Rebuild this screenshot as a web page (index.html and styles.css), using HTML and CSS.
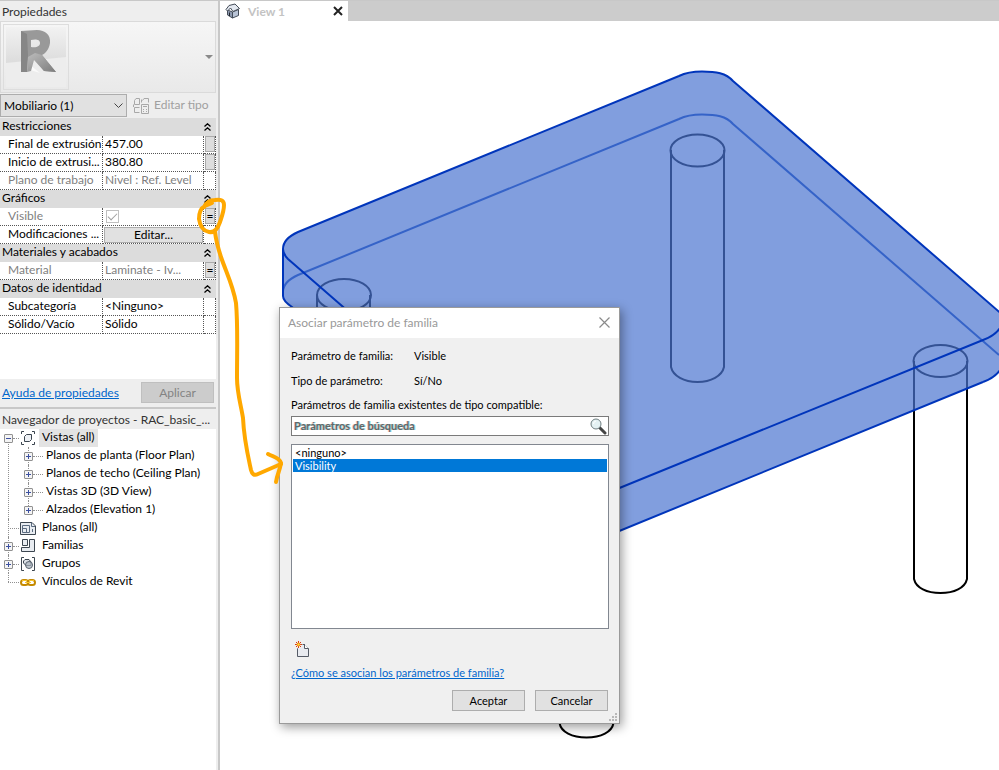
FILE: index.html
```html
<!DOCTYPE html>
<html lang="es">
<head>
  <meta charset="UTF-8">
  <meta name="viewport" content="width=device-width, initial-scale=1.0">
  <title>Asociar parámetro de familia</title>
  <link rel="stylesheet" href="styles.css">
</head>
<body>
  <aside class="sidebar">
    <section class="properties">
      <h2 class="panel-title">Propiedades</h2>

      <div class="type-selector">
        <div class="type-thumb">
          <svg width="60" height="60" viewBox="0 0 60 60">
            <defs>
              <linearGradient id="thumbBg" x1="0" y1="0" x2="0" y2="1">
                <stop offset="0" stop-color="#f2f2f2"/>
                <stop offset="1" stop-color="#dcdcdc"/>
              </linearGradient>
              <linearGradient id="legShade" x1="0" y1="0" x2="1" y2="1">
                <stop offset="0" stop-color="#bdbdbd"/>
                <stop offset="1" stop-color="#7c7c7c"/>
              </linearGradient>
            </defs>
            <rect width="60" height="36" fill="url(#thumbBg)"/>
            <path d="M0 36 60 30V60H0z" fill="#ededed"/>
            <path d="M21 42 34 46 24 38z" fill="#fafafa"/>
            <path fill-rule="evenodd" d="M15 4 31 3C39 3 45 8 44 16C43 22 40 26 36 28L50 45 38 44 27 30 22 32 21 45 15 45z M25 13V20C31 21 34 19 34 16C34 12 29 12 25 13z" fill="#999"/>
            <path d="M15 4 21 7 22 28 21 45 15 45z" fill="#868686"/>
            <path d="M22 30 29 26 36 28 50 45 38 44 28 33 25 44 21 45z" fill="url(#legShade)"/>
          </svg>
        </div>
        <span class="caret"></span>
      </div>

      <div class="filter-row">
        <div class="filter">
          <select aria-label="Filtro de categoría">
            <option>Mobiliario (1)</option>
          </select>
          <svg width="9" height="6" viewBox="0 0 9 6" fill="none" stroke="#444"><path d="M.5 .5 4.500 4.500 8.500 .5"/></svg>
        </div>
        <button class="edit-type" type="button" disabled>
          <svg width="17" height="16" viewBox="0 0 17 16" fill="none" stroke="#a8a8a8">
            <path d="M1.500 2.500 3 .5H6.500V6.500H1.500zM9.500 2.500 11 .5H15.500V4.500M8.500 4.500V1.500M.5 6.500V9M1.500 9.500H6.500M1.500 9.500V14.500H6.500M8.500 6.500H15.500V15.500H8.500z"/>
            <path d="M10 8.500H14M10 11.500H11M13 11.500H14M10 13.500H11M13 13.500H14"/>
          </svg>
          <span>Editar tipo</span>
        </button>
      </div>

      <div class="props-area">
        <table class="props">
          <colgroup>
            <col class="col-name">
            <col>
            <col class="col-assoc">
          </colgroup>
          <tbody>
            <tr class="group"><th colspan="2">Restricciones</th><td><svg class="chevrons" viewBox="0 0 7 8"><path d="M.5 3.500 3.500 .8 6.500 3.500M.5 7.500 3.500 4.800 6.500 7.500"/></svg></td></tr>
            <tr><th>Final de extrusión</th><td>457.00</td><td><button class="assoc" type="button" aria-label="Asociar"></button></td></tr>
            <tr><th>Inicio de extrusi...</th><td>380.80</td><td><button class="assoc" type="button" aria-label="Asociar"></button></td></tr>
            <tr class="readonly"><th>Plano de trabajo</th><td>Nivel : Ref. Level</td><td></td></tr>

            <tr class="group"><th colspan="2">Gráficos</th><td><svg class="chevrons" viewBox="0 0 7 8"><path d="M.5 3.500 3.500 .8 6.500 3.500M.5 7.500 3.500 4.800 6.500 7.500"/></svg></td></tr>
            <tr class="readonly"><th><label for="visible">Visible</label></th><td><input id="visible" class="check" type="checkbox" checked disabled></td><td><button class="assoc" type="button">=</button></td></tr>
            <tr><th>Modificaciones ...</th><td class="has-button"><button class="edit" type="button">Editar...</button></td><td></td></tr>

            <tr class="group"><th colspan="2">Materiales y acabados</th><td><svg class="chevrons" viewBox="0 0 7 8"><path d="M.5 3.500 3.500 .8 6.500 3.500M.5 7.500 3.500 4.800 6.500 7.500"/></svg></td></tr>
            <tr class="readonly"><th>Material</th><td>Laminate - Iv...</td><td><button class="assoc" type="button">=</button></td></tr>

            <tr class="group"><th colspan="2">Datos de identidad</th><td><svg class="chevrons" viewBox="0 0 7 8"><path d="M.5 3.500 3.500 .8 6.500 3.500M.5 7.500 3.500 4.800 6.500 7.500"/></svg></td></tr>
            <tr><th>Subcategoría</th><td>&lt;Ninguno&gt;</td><td></td></tr>
            <tr><th>Sólido/Vacío</th><td>Sólido</td><td></td></tr>
          </tbody>
        </table>
      </div>

      <div class="props-footer">
        <a href="#">Ayuda de propiedades</a>
        <button class="apply" type="button" disabled>Aplicar</button>
      </div>
    </section>

    <section class="browser">
      <h2 class="panel-title">Navegador de proyectos - RAC_basic_...</h2>
      <ul class="tree">
        <li>
          <div class="node">
            <button class="toggle open" type="button" aria-label="Contraer"></button><span class="dots"></span>
            <svg class="icon" viewBox="0 0 16 16" fill="none" stroke="#3c4650">
              <path d="M4 1.500H1.500V4M12 1.500H14.500V4M1.500 12V14.500H4M14.500 12V14.500H12"/>
              <path d="M4.500 6.500 6.500 4.500H11.500V9.500L9.500 11.500H4.500z" fill="#eef1f5"/>
            </svg>
            <span class="label selected">Vistas (all)</span>
          </div>
          <ul>
            <li><div class="node"><button class="toggle" type="button" aria-label="Expandir"></button><span class="dots"></span><span class="label">Planos de planta (Floor Plan)</span></div></li>
            <li><div class="node"><button class="toggle" type="button" aria-label="Expandir"></button><span class="dots"></span><span class="label">Planos de techo (Ceiling Plan)</span></div></li>
            <li><div class="node"><button class="toggle" type="button" aria-label="Expandir"></button><span class="dots"></span><span class="label">Vistas 3D (3D View)</span></div></li>
            <li><div class="node"><button class="toggle" type="button" aria-label="Expandir"></button><span class="dots"></span><span class="label">Alzados (Elevation 1)</span></div></li>
          </ul>
        </li>
        <li>
          <div class="node leaf">
            <span class="dots"></span>
            <svg class="icon" viewBox="0 0 16 16" fill="none" stroke="#3c4650">
              <path d="M.5 2.500H12L15.500 6V14.500H.5z" fill="#e8ecf1"/>
              <path d="M11.500 2.500V6.500H15M2.500 5.500H9.500V12.500H2.500zM2.500 8.500H6.500V12.500M12.500 9V12" stroke="#5a6b80"/>
            </svg>
            <span class="label">Planos (all)</span>
          </div>
        </li>
        <li>
          <div class="node">
            <button class="toggle" type="button" aria-label="Expandir"></button><span class="dots"></span>
            <svg class="icon" viewBox="0 0 16 16" stroke="#3c4650" fill="#e8ecf1">
              <path d="M2.500 1.500H7.500V7.500H2.500zM9.500 1.500H14.500V13.500H1.500V9.500H9.500z"/>
            </svg>
            <span class="label">Familias</span>
          </div>
        </li>
        <li>
          <div class="node">
            <button class="toggle" type="button" aria-label="Expandir"></button><span class="dots"></span>
            <svg class="icon" viewBox="0 0 16 16" fill="none" stroke="#3c4650">
              <path d="M4 1.500H1.500V14.500H4M12 1.500H14.500V14.500H12"/>
              <path d="M5 3.500H9L11 6V9.500H6L3.500 7V5z" fill="#dde2e8"/>
              <circle cx="9" cy="9" r="3.500" fill="#aab3be" fill-opacity=".7" stroke="#5a6470"/>
            </svg>
            <span class="label">Grupos</span>
          </div>
        </li>
        <li>
          <div class="node leaf">
            <span class="dots"></span>
            <svg class="icon" viewBox="0 0 16 16" fill="none">
              <rect x="1" y="6" width="7" height="5" rx="2.500" stroke="#c58a00" stroke-width="2"/>
              <rect x="8" y="6" width="7" height="5" rx="2.500" stroke="#c58a00" stroke-width="2"/>
              <path d="M2 6.500H7M9 6.500H14M5 8.500H11" stroke="#f7c52b"/>
            </svg>
            <span class="label">Vínculos de Revit</span>
          </div>
        </li>
      </ul>
    </section>
  </aside>

  <main class="workspace">
    <div class="tabs">
      <div class="tab">
        <svg width="16" height="16" viewBox="0 0 16 16" stroke="#444c58" stroke-linejoin="round">
          <path d="M2.500 7V12L7.500 15V9z" fill="#8e9ab0"/>
          <path d="M7.500 9 13.500 6.500V12.500L7.500 15z" fill="#b9c4d6"/>
          <path d="M1 6.500 4 2.500 10 1 14.500 5.500 8 8.500 5.500 5 2.500 8z" fill="#e3e8f0"/>
          <path d="M4.500 9.500V13" stroke="#20252d"/>
        </svg>
        <span class="tab-name">View 1</span>
        <button class="tab-close" type="button" aria-label="Cerrar vista">
          <svg width="10" height="10" viewBox="0 0 10 10"><path d="M1 1 9 9M9 1 1 9" stroke="#222" stroke-width="2"/></svg>
        </button>
      </div>
    </div>
    <div class="canvas">
      <svg class="model" viewBox="220 21 779 749" preserveAspectRatio="xMinYMin slice" fill="none">
        <!-- legs below the board -->
        <g stroke="#000" stroke-width="2">
          <path d="M914 409V579C916 588 927 593 940.500 593S965 588 967 579V388"/>
          <path d="M559.500 690V723C561 732 572 737.500 586.500 737.500S612 732 613.500 723V690"/>
        </g>
        <!-- selected board -->
        <path d="M283 296V249C283 241 289 236 298 232L679 76C685 73 692 71.500 702 71.500C716 71.500 726 73 733 81L999 312L1020 330V372L999 370C995 376 991 379 983 382L590 543Q572 550 556 537L292 307Q283 301 283 296z" fill="#819ede"/>
        <g stroke="#3563c8" stroke-width="2">
          <path d="M283 292C283 284 289 279 298 275L679 119C685 116 692 114.500 702 114.500C716 114.500 726 116 733 124L999 355"/>
        </g>
        <!-- legs seen through the board -->
        <g stroke="#345294" stroke-width="2">
          <ellipse cx="697.500" cy="150.500" rx="27" ry="16"/>
          <path d="M671 150V367C673 376 684 382 697.500 382S722 376 724 367V150"/>
          <ellipse cx="344" cy="295" rx="27" ry="16"/>
          <path d="M317 295V320M370 295V320"/>
          <ellipse cx="940.500" cy="361" rx="27" ry="16"/>
          <path d="M914 361V410M967 361V389"/>
        </g>
        <g stroke="#0035bb" stroke-width="2">
          <path d="M983 382 590 543Q572 550 556 537L292 307Q283 301 283 296V249C283 241 289 236 298 232L679 76C685 73 692 71.500 702 71.500C716 71.500 726 73 733 81L1001 313.500"/>
          <path d="M283 249C283 253 284 255 288 259L556 492Q572 507 590 500L983 340C991 337 996 334 1000 328M983 382C991 379 996 376 1000 370"/>
        </g>
      </svg>
    </div>
  </main>

  <div class="dialog" role="dialog" aria-labelledby="dialogTitle">
    <header class="dialog-bar">
      <h1 id="dialogTitle">Asociar parámetro de familia</h1>
      <button class="dialog-close" type="button" aria-label="Cerrar">
        <svg width="11" height="11" viewBox="0 0 11 11"><path d="M.5 .5 10.500 10.500M10.500 .5 .5 10.500" stroke="#8a8a8a" stroke-width="1.200"/></svg>
      </button>
    </header>
    <div class="dialog-body">
      <dl class="info">
        <dt>Parámetro de familia:</dt><dd>Visible</dd>
        <dt>Tipo de parámetro:</dt><dd>Sí/No</dd>
      </dl>
      <label class="list-label" for="paramList">Parámetros de familia existentes de tipo compatible:</label>
      <div class="search">
        <input type="text" placeholder="Parámetros de búsqueda" aria-label="Parámetros de búsqueda">
        <svg width="17" height="17" viewBox="0 0 17 17" fill="none">
          <path d="M9.500 9.500 15 15" stroke="#444" stroke-width="3" stroke-linecap="round"/>
          <circle cx="6" cy="6" r="5" fill="#e4f1f3" stroke="#6f7d80"/>
          <path d="M3.500 6A3 3 0 0 1 6 3" stroke="#fff"/>
        </svg>
      </div>
      <select id="paramList" class="param-list" size="2">
        <option>&lt;ninguno&gt;</option>
        <option selected>Visibility</option>
      </select>
      <button class="new-param" type="button" aria-label="Nuevo parámetro">
        <svg width="16" height="18" viewBox="0 0 16 18" fill="none">
          <path d="M3.500 4.500H10.500L14.500 8.500V16.500H3.500z" fill="#e9ebf0" stroke="#555b66"/>
          <path d="M10.500 4V8.500H14.500" stroke="#555b66" fill="#fff"/>
          <circle cx="4.500" cy="4.500" r="4" fill="#efefef"/>
          <path d="M4.500 1V8M1 4.500H8M2 2 7 7M7 2 2 7" stroke="#d83a10"/>
          <circle cx="4.500" cy="4.500" r="1.500" fill="#ffe640" stroke="#f08a10"/>
        </svg>
      </button>
      <a class="help" href="#">¿Cómo se asocian los parámetros de familia?</a>
      <div class="actions">
        <button type="button">Aceptar</button>
        <button type="button">Cancelar</button>
      </div>
    </div>
    <svg class="grip" width="8" height="8" viewBox="0 0 8 8" fill="#b8b8b8">
      <path d="M6 0h2v2H6zM6 3h2v2H6zM3 3h2v2H3zM6 6h2v2H6zM3 6h2v2H3zM0 6h2v2H0z"/>
    </svg>
  </div>

  <!-- hand drawn arrow from the associate button to the list -->
  <svg class="marker" width="300" height="500" viewBox="0 0 300 500" fill="none" stroke="#ffa800" stroke-width="4" stroke-linecap="round" stroke-linejoin="round">
    <path d="M212 203 205 206C201 208 199 213 199 219C200 226 203 231 209 232C215 233 218 228 220 222C222 216 224 211 224 205C224 200 220 199 215 200C210 200 206 203 204 207"/>
    <path d="M215 232C216 240 218 248 221 257C226 272 233 285 236 303C238 325 237 350 237 378C237 393 241 405 243 418C244 440 248 456 251 470C252 474 254 476 258 474L281 464"/>
    <path d="M268 454C273 457 279 457 281 463C280 470 277 475 276 482"/>
  </svg>
</body>
</html>
```
FILE: styles.css
```css
* {
  box-sizing: border-box;
}

body {
  margin: 0;
  display: flex;
  height: 100vh;
  overflow: hidden;
  position: relative;
  background: #ffffff;
  font-family: Lato, "Open Sans", sans-serif;
  font-size: 12px;
  line-height: 17px;
  color: #000000;
}

h1, h2, ul, dl, dd {
  margin: 0;
  padding: 0;
  font-size: 12px;
  font-weight: normal;
}

button, select, input {
  font: inherit;
  color: inherit;
  margin: 0;
  padding: 0;
}

svg {
  display: block;
}

a {
  color: #0066cc;
}

/* left column */
.sidebar {
  flex: 0 0 220px;
  display: flex;
  flex-direction: column;
  background: #eeeeee;
  border-top: 1px solid #c8c8c8;
  border-right: 2px solid #c8c8c8;
  padding-right: 2px;
}

.panel-title {
  padding: 2px;
  height: 20px;
  color: #333333;
  white-space: nowrap;
}

.type-selector {
  display: flex;
  align-items: center;
  justify-content: space-between;
  height: 72px;
  padding: 2px;
  border: 1px solid #dadada;
  background: linear-gradient(#f6f6f6, #e9e9e9);
}

.type-thumb {
  padding: 2px;
  border: 1px solid #dddddd;
}

.caret {
  border: 4px solid transparent;
  border-top-color: #8a8a8a;
  border-bottom: 0;
}

.filter-row {
  display: flex;
  align-items: center;
  height: 25px;
  gap: 6px;
}

.filter {
  position: relative;
  width: 127px;
}

.filter select {
  appearance: none;
  display: block;
  width: 100%;
  height: 23px;
  padding: 0 3px;
  border: 1px solid #adadad;
  border-radius: 0;
  background: #e1e1e1;
}

.filter svg {
  position: absolute;
  right: 4px;
  top: 9px;
  pointer-events: none;
}

.edit-type {
  display: flex;
  align-items: center;
  gap: 4px;
  border: 0;
  background: none;
  color: #a0a0a0;
  white-space: nowrap;
}

.edit-type span {
  padding-bottom: 2px;
}

.props-area {
  min-height: 261px;
  background: #ffffff;
}

.props {
  width: 100%;
  table-layout: fixed;
  border-collapse: separate;
  border-spacing: 0;
}

.col-name {
  width: 103px;
}

.col-assoc {
  width: 12px;
}

.props th,
.props td {
  height: 18px;
  padding: 0 0 0 2px;
  border-right: 1px dotted #555555;
  border-bottom: 1px dotted #555555;
  text-align: left;
  vertical-align: top;
  font-weight: normal;
  line-height: 15px;
  white-space: nowrap;
  overflow: hidden;
}

.props th {
  padding-left: 8px;
}

.props td:last-child {
  padding: 0 0 0 1px;
}

.props .group th,
.props .group td {
  padding: 0;
  border: 0;
  background: #dcdcdc;
  line-height: 16px;
}

.props .group th {
  padding-left: 2px;
}

.props .group td {
  vertical-align: middle;
}

.props .readonly {
  color: #808080;
}

.chevrons {
  width: 7px;
  height: 8px;
  fill: none;
  stroke: #000000;
  stroke-width: 1.3;
}

.assoc {
  display: block;
  width: 10px;
  height: 16px;
  border: 1px solid #aaaaaa;
  background: #dddddd;
  color: #000000;
  line-height: 12px;
}

.check {
  appearance: none;
  display: block;
  width: 13px;
  height: 13px;
  margin: 2px 1px;
  border: 1px solid #c0c0c0;
  background: #ffffff;
}

.check:checked::after {
  content: "";
  display: block;
  width: 8px;
  height: 4px;
  margin: 2px 1px;
  border-left: 1px solid #a0a0a0;
  border-bottom: 1px solid #a0a0a0;
  transform: rotate(-45deg);
}

.props .has-button {
  padding: 1px 0 0 1px;
}

.edit {
  display: block;
  width: 100%;
  height: 16px;
  border: 1px solid #adadad;
  background: #e1e1e1;
  line-height: 14px;
}

.props-footer {
  display: flex;
  align-items: center;
  justify-content: space-between;
  height: 28px;
  padding: 0 2px 2px;
}

.apply {
  width: 73px;
  height: 21px;
  border: 1px solid #bfbfbf;
  background: #cccccc;
  color: #838383;
}

/* project browser */
.browser {
  flex: 1;
  display: flex;
  flex-direction: column;
  border-top: 2px solid #c8c8c8;
}

.tree {
  flex: 1;
  padding-left: 4px;
  background: #ffffff;
  list-style: none;
}

.tree ul {
  padding-left: 20px;
  list-style: none;
}

.tree li {
  position: relative;
}

/* vertical guide of every branch */
.tree li::before {
  content: "";
  position: absolute;
  left: 4px;
  top: 0;
  bottom: 0;
  border-left: 1px dotted #909090;
}

.tree > li:first-child::before {
  top: 9px;
}

.tree li:last-child::before {
  bottom: auto;
  height: 9px;
}

.node {
  display: flex;
  align-items: center;
  height: 18px;
}

.toggle {
  position: relative;
  width: 9px;
  height: 9px;
  border: 1px solid #919191;
  border-radius: 1px;
  background:
    linear-gradient(#3c50a0, #3c50a0) center / 5px 1px no-repeat,
    linear-gradient(#3c50a0, #3c50a0) center / 1px 5px no-repeat,
    #f4f4f4;
}

.toggle.open {
  background: linear-gradient(#3c50a0, #3c50a0) center / 5px 1px no-repeat, #f4f4f4;
}

.dots {
  width: 6px;
  margin-right: 1px;
  border-top: 1px dotted #909090;
}

.tree ul .dots {
  width: 10px;
  margin-right: 0;
}

.leaf .dots {
  width: 11px;
  margin-left: 4px;
}

.icon {
  width: 16px;
  height: 16px;
}

.label {
  padding: 0 3px 2px;
  line-height: 16px;
}

.icon + .label {
  margin-left: 3px;
}

.selected {
  background: #e3e3e3;
}

/* drawing area */
.workspace {
  flex: 1;
  min-width: 0;
  display: flex;
  flex-direction: column;
}

.tabs {
  height: 21px;
  background: #cccccc;
  border-top: 1px solid #c8c8c8;
}

.tab {
  display: flex;
  align-items: center;
  width: 128px;
  height: 20px;
  padding: 0 5px;
  background: #ffffff;
}

.tab-name {
  flex: 1;
  margin-left: 7px;
  color: #c3c3c3;
  font-weight: bold;
}

.tab-close,
.dialog-close {
  border: 0;
  background: none;
}

.canvas {
  flex: 1;
  min-height: 0;
}

.model {
  width: 100%;
  height: 100%;
}

/* dialog */
.dialog {
  position: absolute;
  left: 279px;
  top: 307px;
  width: 341px;
  border: 1px solid #9a9a9a;
  background: #f0f0f0;
  box-shadow: 2px 3px 10px rgba(0, 0, 0, 0.4);
}

.dialog-bar {
  display: flex;
  align-items: center;
  justify-content: space-between;
  height: 30px;
  padding: 0 9px 2px 8px;
  background: #ffffff;
  color: #999999;
}

.dialog-body {
  display: flex;
  flex-direction: column;
  padding: 9px 10px 12px 11px;
  font-size: 11px;
}

.info {
  display: grid;
  grid-template-columns: 123px 1fr;
  row-gap: 8px;
  margin-bottom: 7px;
  font-size: 11px;
}

.info dd {
  font-size: 11px;
}

.search {
  display: flex;
  align-items: center;
  height: 20px;
  margin-top: 3px;
  padding: 0 1px 0 2px;
  border: 1px solid #7a7a7a;
  background: #ffffff;
}

.search input {
  flex: 1;
  min-width: 0;
  padding-bottom: 2px;
  border: 0;
  outline: 0;
  background: none;
}

.search input::placeholder {
  color: #5f6868;
  font-weight: bold;
  text-shadow: 1px 0 rgba(0, 190, 190, 0.4), -1px 0 rgba(230, 60, 60, 0.3);
}

.param-list {
  height: 185px;
  margin-top: 8px;
  padding: 1px;
  border: 1px solid #828790;
  border-radius: 0;
  background: #ffffff;
  overflow: hidden;
}

.param-list option {
  min-height: 13px;
  padding: 0 2px;
  line-height: 13px;
}

.param-list option:checked {
  background: linear-gradient(#0078d7, #0078d7);
  color: #ffffff;
}

.new-param {
  align-self: flex-start;
  margin: 11px 3px 6px;
  border: 0;
  background: none;
}

.help {
  align-self: flex-start;
}

.actions {
  display: flex;
  justify-content: flex-end;
  gap: 10px;
  margin: 9px 1px 0 0;
}

.actions button {
  width: 73px;
  height: 21px;
  border: 1px solid #adadad;
  background: #e1e1e1;
}

.grip {
  position: absolute;
  right: 2px;
  bottom: 2px;
}

.marker {
  position: absolute;
  left: 0;
  top: 0;
  pointer-events: none;
}
```
